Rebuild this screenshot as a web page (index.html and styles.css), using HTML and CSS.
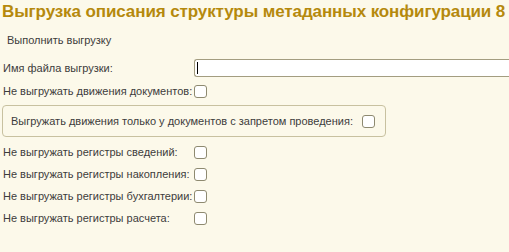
FILE: index.html
```html
<!DOCTYPE html>
<html lang="ru">
<head>
<meta charset="utf-8">
<link rel="stylesheet" href="styles.css">
</head>
<body>
<div class="form">
  <h1 class="title">Выгрузка описания структуры метаданных конфигурации 8</h1>
  <div class="toolbar">Выполнить выгрузку</div>
  <div class="row row-input">
    <span class="label">Имя файла выгрузки:</span>
    <div class="input"><span class="caret"></span></div>
  </div>
  <div class="row row-docs">
    <span class="label">Не выгружать движения документов:</span>
    <span class="check"></span>
  </div>
  <div class="group">
    <span class="label">Выгружать движения только у документов с запретом проведения:</span>
    <span class="check"></span>
  </div>
  <div class="rows">
    <div class="row">
      <span class="label">Не выгружать регистры сведений:</span>
      <span class="check"></span>
    </div>
    <div class="row">
      <span class="label">Не выгружать регистры накопления:</span>
      <span class="check"></span>
    </div>
    <div class="row">
      <span class="label">Не выгружать регистры бухгалтерии:</span>
      <span class="check"></span>
    </div>
    <div class="row">
      <span class="label">Не выгружать регистры расчета:</span>
      <span class="check"></span>
    </div>
  </div>
</div>
</body>
</html>
```

FILE: styles.css
```css
html, body {
  margin: 0;
  padding: 0;
  background: #fcf9ea;
  overflow: hidden;
}
body {
  width: 509px;
  height: 252px;
  font-family: "Liberation Sans", Arial, sans-serif;
  font-size: 11px;
  color: #3c3c3c;
}
.form {
  padding: 0 0 0 3px;
}
.title {
  margin: 0 0 0 -1px;
  padding: 2px 0 0 0;
  font-size: 17px;
  letter-spacing: -0.1px;
  font-weight: bold;
  color: #b5890d;
  white-space: nowrap;
  line-height: 20px;
}
.toolbar {
  margin-top: 8px;
  padding-left: 4px;
  height: 20px;
  line-height: 20px;
}
.row {
  display: flex;
  align-items: center;
  height: 22px;
}
.row-input {
  margin-top: 9px;
  height: 18px;
}
.row-docs {
  margin-top: 3px;
}
.row .label {
  width: 191px;
  white-space: nowrap;
}
.input {
  flex: 1;
  height: 16px;
  background: #fff;
  border: 1px solid #a39d80;
  border-right: none;
  border-radius: 3px 0 0 3px;
  display: flex;
  align-items: center;
  padding-left: 2px;
}
.caret {
  width: 1px;
  height: 12px;
  background: #000;
}
.check {
  width: 11px;
  height: 11px;
  border: 1px solid #8e8a70;
  border-radius: 3px;
  background: #fff;
  flex: none;
}
.group {
  margin: 3px 0 0 -1px;
  width: 374px;
  height: 30px;
  border: 1px solid #c8c1a0;
  border-radius: 4px;
  display: flex;
  align-items: center;
  padding-left: 8px;
  box-sizing: content-box;
}
.group .label {
  margin-right: 9px;
  white-space: nowrap;
}
.rows {
  margin-top: 4px;
}
```
